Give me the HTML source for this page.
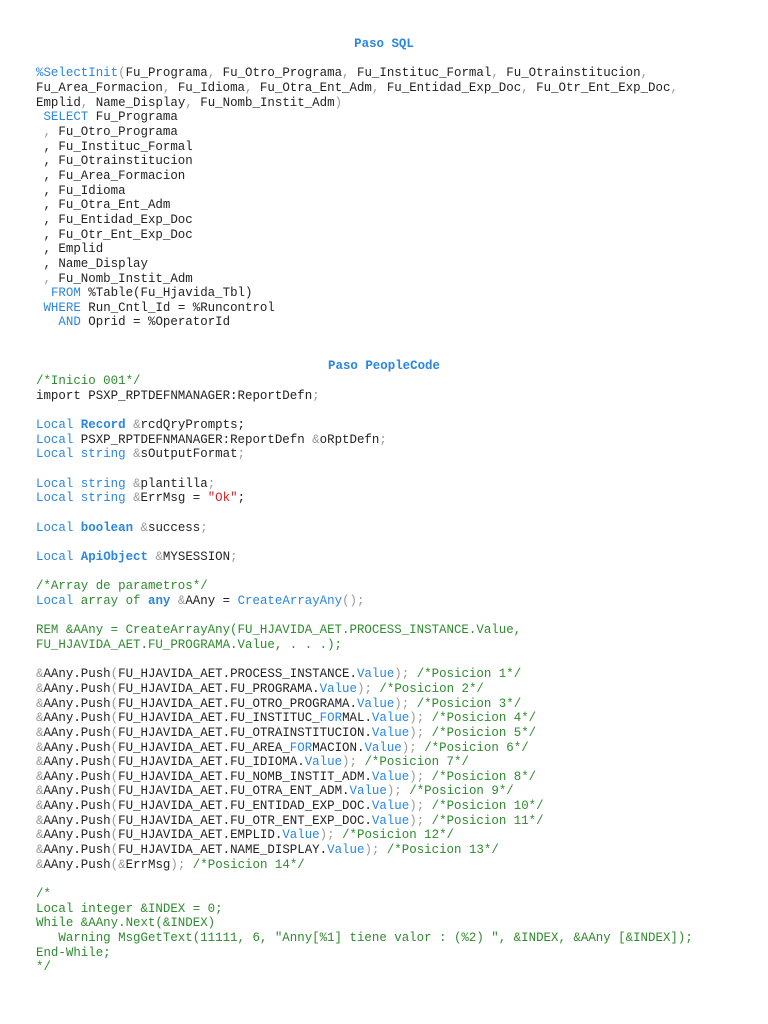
<!DOCTYPE html>
<html><head><meta charset="utf-8"><style>
html,body{margin:0;padding:0;background:#fff;width:768px;height:1024px;overflow:hidden}
pre{position:absolute;left:36px;top:37px;margin:0;font-family:"Liberation Mono",monospace;font-size:12.45px;line-height:14.65px;color:#222}
.t{display:block;width:696px;text-align:center;color:#2a86e0;font-weight:bold}
.k{color:#2a86e0}.b{color:#2a86e0;font-weight:bold}.c{color:#2e8b2e}.r{color:#e02020}.p{color:#999}
</style></head><body><pre><span class="t">Paso SQL</span>
<span class="k">%SelectInit</span><span class="p">(</span>Fu_Programa<span class="p">,</span> Fu_Otro_Programa<span class="p">,</span> Fu_Instituc_Formal<span class="p">,</span> Fu_Otrainstitucion<span class="p">,</span>
Fu_Area_Formacion<span class="p">,</span> Fu_Idioma<span class="p">,</span> Fu_Otra_Ent_Adm<span class="p">,</span> Fu_Entidad_Exp_Doc<span class="p">,</span> Fu_Otr_Ent_Exp_Doc<span class="p">,</span>
Emplid<span class="p">,</span> Name_Display<span class="p">,</span> Fu_Nomb_Instit_Adm<span class="p">)</span>
 <span class="k">SELECT</span> Fu_Programa
 <span class="p">,</span> Fu_Otro_Programa
 , Fu_Instituc_Formal
 , Fu_Otrainstitucion
 , Fu_Area_Formacion
 , Fu_Idioma
 , Fu_Otra_Ent_Adm
 , Fu_Entidad_Exp_Doc
 , Fu_Otr_Ent_Exp_Doc
 , Emplid
 , Name_Display
 <span class="p">,</span> Fu_Nomb_Instit_Adm
  <span class="k">FROM</span> %Table(Fu_Hjavida_Tbl)
 <span class="k">WHERE</span> Run_Cntl_Id = %Runcontrol
   <span class="k">AND</span> Oprid = %OperatorId


<span class="t">Paso PeopleCode</span><span class="c">/*Inicio 001*/</span>
import PSXP_RPTDEFNMANAGER:ReportDefn<span class="p">;</span>

<span class="k">Local</span> <span class="b">Record</span> <span class="p">&amp;</span>rcdQryPrompts;
<span class="k">Local</span> PSXP_RPTDEFNMANAGER:ReportDefn <span class="p">&amp;</span>oRptDefn<span class="p">;</span>
<span class="k">Local</span> <span class="k">string</span> <span class="p">&amp;</span>sOutputFormat<span class="p">;</span>

<span class="k">Local</span> <span class="k">string</span> <span class="p">&amp;</span>plantilla<span class="p">;</span>
<span class="k">Local</span> <span class="k">string</span> <span class="p">&amp;</span>ErrMsg = <span class="r">"Ok"</span>;

<span class="k">Local</span> <span class="b">boolean</span> <span class="p">&amp;</span>success<span class="p">;</span>

<span class="k">Local</span> <span class="b">ApiObject</span> <span class="p">&amp;</span>MYSESSION<span class="p">;</span>

<span class="c">/*Array de parametros*/</span>
<span class="k">Local</span> <span class="c">array of</span> <span class="b">any</span> <span class="p">&amp;</span>AAny = <span class="k">CreateArrayAny</span><span class="p">();</span>

<span class="c">REM &amp;AAny = CreateArrayAny(FU_HJAVIDA_AET.PROCESS_INSTANCE.Value,
FU_HJAVIDA_AET.FU_PROGRAMA.Value, . . .);</span>

<span class="p">&amp;</span>AAny.Push<span class="p">(</span>FU_HJAVIDA_AET.PROCESS_INSTANCE.<span class="k">Value</span><span class="p">);</span> <span class="c">/*Posicion 1*/</span>
<span class="p">&amp;</span>AAny.Push<span class="p">(</span>FU_HJAVIDA_AET.FU_PROGRAMA.<span class="k">Value</span><span class="p">);</span> <span class="c">/*Posicion 2*/</span>
<span class="p">&amp;</span>AAny.Push<span class="p">(</span>FU_HJAVIDA_AET.FU_OTRO_PROGRAMA.<span class="k">Value</span><span class="p">);</span> <span class="c">/*Posicion 3*/</span>
<span class="p">&amp;</span>AAny.Push<span class="p">(</span>FU_HJAVIDA_AET.FU_INSTITUC_<span class="k">FOR</span>MAL.<span class="k">Value</span><span class="p">);</span> <span class="c">/*Posicion 4*/</span>
<span class="p">&amp;</span>AAny.Push<span class="p">(</span>FU_HJAVIDA_AET.FU_OTRAINSTITUCION.<span class="k">Value</span><span class="p">);</span> <span class="c">/*Posicion 5*/</span>
<span class="p">&amp;</span>AAny.Push<span class="p">(</span>FU_HJAVIDA_AET.FU_AREA_<span class="k">FOR</span>MACION.<span class="k">Value</span><span class="p">);</span> <span class="c">/*Posicion 6*/</span>
<span class="p">&amp;</span>AAny.Push<span class="p">(</span>FU_HJAVIDA_AET.FU_IDIOMA.<span class="k">Value</span><span class="p">);</span> <span class="c">/*Posicion 7*/</span>
<span class="p">&amp;</span>AAny.Push<span class="p">(</span>FU_HJAVIDA_AET.FU_NOMB_INSTIT_ADM.<span class="k">Value</span><span class="p">);</span> <span class="c">/*Posicion 8*/</span>
<span class="p">&amp;</span>AAny.Push<span class="p">(</span>FU_HJAVIDA_AET.FU_OTRA_ENT_ADM.<span class="k">Value</span><span class="p">);</span> <span class="c">/*Posicion 9*/</span>
<span class="p">&amp;</span>AAny.Push<span class="p">(</span>FU_HJAVIDA_AET.FU_ENTIDAD_EXP_DOC.<span class="k">Value</span><span class="p">);</span> <span class="c">/*Posicion 10*/</span>
<span class="p">&amp;</span>AAny.Push<span class="p">(</span>FU_HJAVIDA_AET.FU_OTR_ENT_EXP_DOC.<span class="k">Value</span><span class="p">);</span> <span class="c">/*Posicion 11*/</span>
<span class="p">&amp;</span>AAny.Push<span class="p">(</span>FU_HJAVIDA_AET.EMPLID.<span class="k">Value</span><span class="p">);</span> <span class="c">/*Posicion 12*/</span>
<span class="p">&amp;</span>AAny.Push<span class="p">(</span>FU_HJAVIDA_AET.NAME_DISPLAY.<span class="k">Value</span><span class="p">);</span> <span class="c">/*Posicion 13*/</span>
<span class="p">&amp;</span>AAny.Push<span class="p">(&amp;</span>ErrMsg<span class="p">);</span> <span class="c">/*Posicion 14*/</span>

<span class="c">/*
Local integer &amp;INDEX = 0;
While &amp;AAny.Next(&amp;INDEX)
   Warning MsgGetText(11111, 6, "Anny[%1] tiene valor : (%2) ", &amp;INDEX, &amp;AAny [&amp;INDEX]);
End-While;
*/</span>
</pre></body></html>
